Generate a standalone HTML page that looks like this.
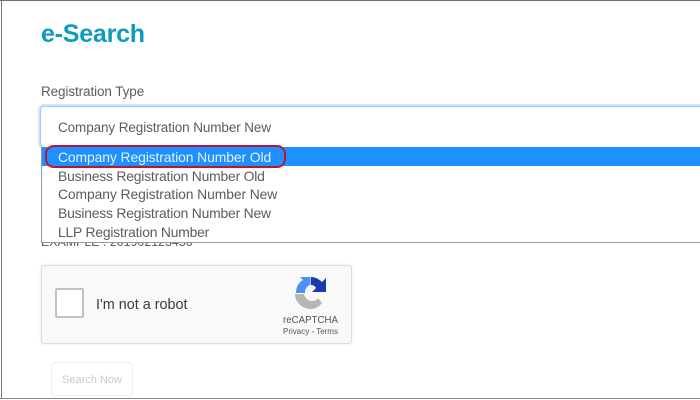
<!DOCTYPE html>
<html><head><meta charset="utf-8">
<style>
html,body{margin:0;padding:0;background:#fff}
#p{position:relative;width:700px;height:400px;overflow:hidden;background:#fff;font-family:"Liberation Sans",sans-serif;color:#555}
#p div{position:absolute;white-space:nowrap}
.t{font-size:13.5px;line-height:16px;letter-spacing:-.1px;color:#5c5c5c}
.l{font-size:13.9px;line-height:16px;letter-spacing:-.1px;color:#5c5c5c}
.b{letter-spacing:-.2px}
</style></head><body>
<div id="p">
<div style="left:0;top:0;width:700px;height:1px;background:#6e6e6e"></div>
<div style="left:1px;top:0;width:1px;height:398px;background:#777"></div>
<div style="left:0;top:398px;width:700px;height:1px;background:#888"></div>
<div style="left:41px;top:19px;font-size:25px;line-height:30px;font-weight:bold;letter-spacing:-.22px;color:#0f9bbd">e-Search</div>
<div class="t" style="left:41px;top:84px">Registration Type</div>
<div style="left:40px;top:106px;width:670px;height:39px;border:1px solid #9cc9fb;border-radius:4px;box-shadow:0 0 0 2px #d0e5fd;background:#fff"></div>
<div class="t" style="left:58px;top:120px">Company Registration Number New</div>
<div style="left:41px;top:235px;font-size:12.4px;line-height:14px;color:#555">EXAMPLE : 201902123456</div>
<div style="left:41px;top:146px;width:670px;height:97px;background:#fff;border:1px solid #8c9db5;border-top:0;box-sizing:border-box"></div>
<div style="left:42px;top:147px;width:658px;height:19px;background:#1e90ff"></div>
<div class="l" style="left:58px;top:149px;color:#e6f2ff">Company Registration Number Old</div>
<div class="l b" style="left:58px;top:168px">Business Registration Number Old</div>
<div class="l" style="left:58px;top:186px">Company Registration Number New</div>
<div class="l b" style="left:58px;top:205px">Business Registration Number New</div>
<div class="l b" style="left:58px;top:224px">LLP Registration Number</div>
<div style="left:45px;top:145px;width:237px;height:19px;border:2px solid #c0142c;border-radius:9px"></div>
<div style="left:41px;top:265px;width:309px;height:77px;background:#f9f9f9;border:1px solid #dcdcdc;border-radius:3px;box-shadow:0 0 3px rgba(0,0,0,.1)"></div>
<div style="left:55px;top:288px;width:25px;height:26px;background:#fff;border:2px solid #c1c1c1;border-radius:2px"></div>
<div style="left:96px;top:297px;font-size:14.4px;line-height:16px;color:#3a3a3a">I'm not a robot</div>
<svg style="position:absolute;left:290px;top:272px" width="42" height="42" viewBox="0 0 42 42">
<path d="M6 21 C6 15 9 10 13 8 L10 5 L20.500 5 L20.500 13 C18 13 15 16 15 21 Z" fill="#4a90f5"/>
<path d="M21 5 C25 5 29 7 32 10 L36 6 L36 20 L22 20 L26 16 C25 14 23 13 21 13 Z" fill="#1c3aa9"/>
<path d="M5 22 L14 22 C15 26 18 29 22 29 C25 29 27 28 28 26 L32 31 C29 35 25 37 21 37 C12 37 5 30 5 22 Z" fill="#b6b6b6"/>
</svg>
<div style="left:283px;top:315px;font-size:9.7px;line-height:12px;color:#555">reCAPTCHA</div>
<div style="left:283px;top:327px;font-size:8px;line-height:10px;color:#555">Privacy - Terms</div>
<div style="left:51px;top:362px;width:80px;height:32px;border:1px solid #eee;border-radius:4px;background:#fff"></div>
<div style="left:62px;top:374px;font-size:11px;line-height:13px;color:#c9c9c9">Search Now</div>
</div>
</body></html>
